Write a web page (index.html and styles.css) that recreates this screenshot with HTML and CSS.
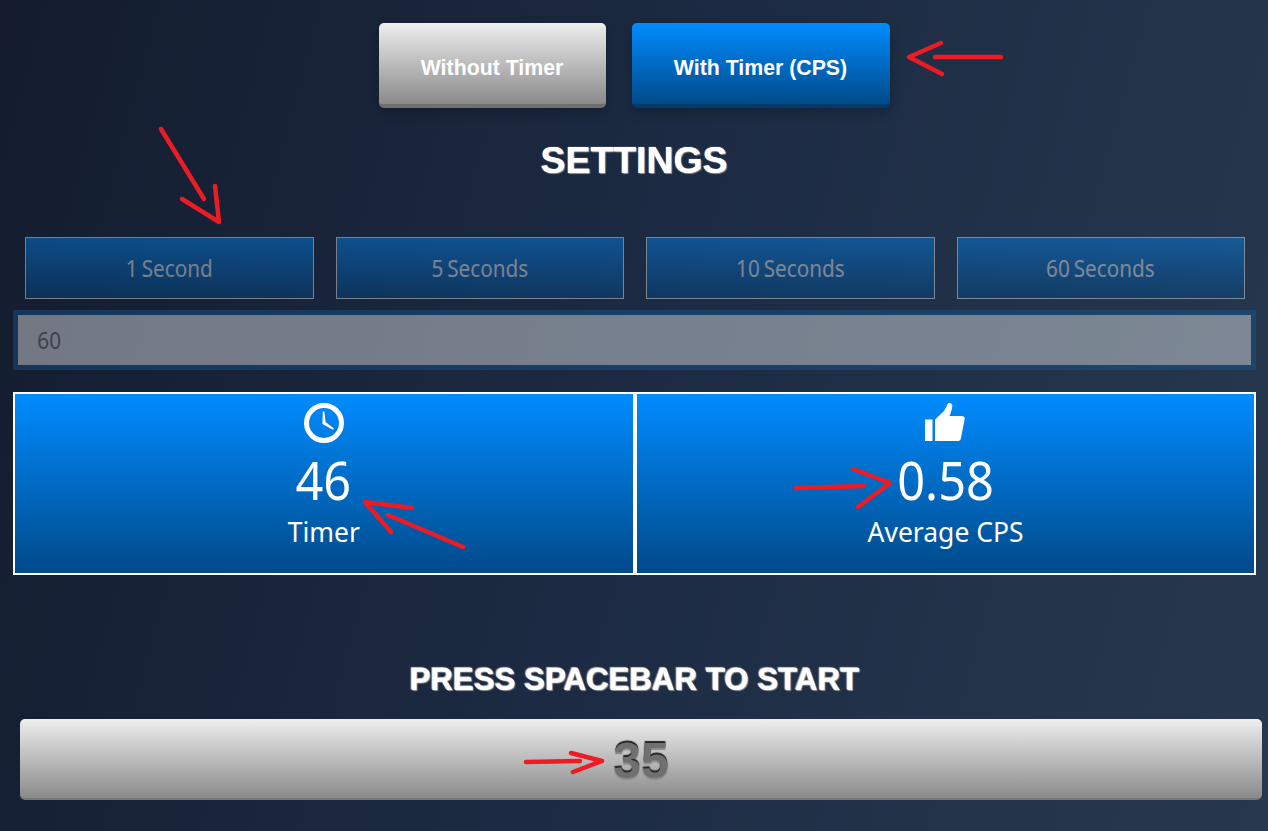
FILE: index.html
```html
<!DOCTYPE html>
<html lang="en">
<head>
<meta charset="utf-8">
<title>CPS Test</title>
<link rel="stylesheet" href="styles.css">
</head>
<body>
<main class="page">
  <div class="modes">
    <button class="mode mode-gray">Without Timer</button>
    <button class="mode mode-blue">With Timer (CPS)</button>
  </div>
  <h2 class="settings-title">SETTINGS</h2>
  <div class="options">
    <button class="option"><span class="option-text">1 Second</span></button>
    <button class="option"><span class="option-text">5 Seconds</span></button>
    <button class="option"><span class="option-text">10 Seconds</span></button>
    <button class="option"><span class="option-text">60 Seconds</span></button>
  </div>
  <div class="custom-time"><span class="option-text">60</span></div>
  <section class="stats">
    <div class="stat">
      <svg class="stat-icon" viewBox="0 0 40 40" aria-hidden="true">
        <circle class="clock-ring" cx="20" cy="20" r="17.5"/>
        <path class="clock-hands" d="M18.8 8.5h1.6l1.2 10.6 8.3 6.3-1 1.3-10.5-5.7z"/>
      </svg>
      <div class="stat-value">46</div>
      <div class="stat-label">Timer</div>
    </div>
    <div class="stat">
      <svg class="stat-icon" viewBox="0 0 40 40" aria-hidden="true">
        <path class="thumb" d="M0 16.5h7.5V38H0zM10 16.500l9-8.500 4-7.500c1-1 3.200-.6 4 .9 1 2-.6 7-2.500 11.500h12.200c2 0 3.300 1.300 3 3.200l-3.800 19.300c-.4 1.800-1.800 2.600-3.500 2.600H10z"/>
      </svg>
      <div class="stat-value">0.58</div>
      <div class="stat-label">Average CPS</div>
    </div>
  </section>
  <h2 class="press-title">PRESS SPACEBAR TO START</h2>
  <div class="press-bar">35</div>
</main>
<svg class="annotations" viewBox="0 0 1268 831" aria-hidden="true">
  <path d="M935 57H1001M941 43L909 57L942 74"/>
  <path d="M161 129L204 199M215 186L219 222L182 199"/>
  <path d="M412 508L365 502L391 532M388 515L463 547"/>
  <path d="M796 488L864 486M853 469L890 483L858 507"/>
  <path d="M526 762L580 761M571 753L602 761L573 772"/>
</svg>
</body>
</html>
```

FILE: styles.css
```css
* { box-sizing: border-box; }

html, body {
  margin: 0;
  height: 831px;
  overflow: hidden;
}

body {
  position: relative;
  background: linear-gradient(105deg, #141c2e 0%, #1c2b43 50%, #27394f 100%);
  font-family: "Noto Sans", sans-serif;
  color: #fff;
}

.page {
  display: flex;
  flex-direction: column;
  padding-top: 23px;
  height: 831px;
}

.modes {
  display: flex;
  justify-content: center;
  gap: 26px;
}

.mode {
  height: 85px;
  border: 0;
  border-radius: 5px;
  font: bold 21.300px "Liberation Sans", Arial, sans-serif;
  color: #fff;
  box-shadow: 0 4px 12px rgba(0, 0, 0, .25);
  padding: 10px 0 0;
}

.mode-gray {
  width: 227px;
  background: linear-gradient(#eeeeee, #8a8a8a);
  border-bottom: 4px solid #6f6f6f;
}

.mode-blue {
  width: 258px;
  background: linear-gradient(#008cff, #004a8a);
  border-bottom: 4px solid #003a6e;
}

.settings-title {
  margin: 31px 0 0;
  text-align: center;
  font: bold 37.400px/43px "Liberation Sans", Arial, sans-serif;
  color: #fff;
  text-shadow: 0 0 1px #fff, 1px 1px 1px #8a8a8a;
}

.options {
  display: flex;
  gap: 22px;
  margin: 55px 23px 0 25px;
}

.option {
  flex: 1;
  height: 62px;
  border: 1px solid #fff;
  background: linear-gradient(#008cff, #004a8a);
  color: #fff;
  opacity: .42;
  font: 23px "Noto Sans", sans-serif;
  word-spacing: -1.500px;
  padding: 0;
}

.option-text {
  display: inline-block;
  transform: scaleX(.9);
  transform-origin: center;
}

.custom-time {
  height: 60px;
  margin: 11px 12px 0 13px;
  padding-left: 18px;
  border: 5px solid rgb(22, 92, 153);
  background: #fff;
  opacity: .4;
  color: #777;
  font: 23px/50px "Noto Sans", sans-serif;
}

.stats {
  display: grid;
  grid-template-columns: 1fr 1fr;
  height: 183px;
  margin: 22px 12px 0 13px;
}

.stat {
  display: flex;
  flex-direction: column;
  align-items: center;
  border: 2px solid #fff;
  background: linear-gradient(#008cff, #004a8a);
  padding-top: 9px;
}

.stat-icon {
  width: 40px;
  height: 40px;
  display: block;
  fill: #fff;
}

.clock-ring {
  fill: none;
  stroke: #fff;
  stroke-width: 5px;
}

.stat-value {
  font-size: 53px;
  line-height: 60px;
  margin-top: 7px;
  transform: scaleX(.92);
}

.stat-label {
  font-size: 27px;
  line-height: 36px;
  margin-top: 4px;
  transform: scaleX(.98);
}

.press-title {
  margin: 85px 0 0;
  text-align: center;
  font: bold 31px/40px "Liberation Sans", Arial, sans-serif;
  letter-spacing: .15px;
  padding-left: 1px;
  color: #fff;
  text-shadow: 0 0 1px #fff, 1px 1px 1px #8a8a8a, -1px -1px 1px #c8c8c8;
}

.press-bar {
  height: 81px;
  margin: 19px 6px 0 20px;
  border-radius: 5px;
  border-bottom: 2px solid #777;
  background: linear-gradient(#eeeeee, #8a8a8a);
  text-align: center;
  color: #707070;
  font: bold 50px/84px "Liberation Sans", Arial, sans-serif;
  text-shadow: 0 -2px 1px #222, 0 2px 1px #8a8a8a;
}

.annotations {
  position: absolute;
  left: 0;
  top: 0;
  width: 1268px;
  height: 831px;
  fill: none;
  stroke: #ed1c24;
  stroke-width: 4.500px;
  stroke-linecap: round;
  stroke-linejoin: round;
  pointer-events: none;
}
```
